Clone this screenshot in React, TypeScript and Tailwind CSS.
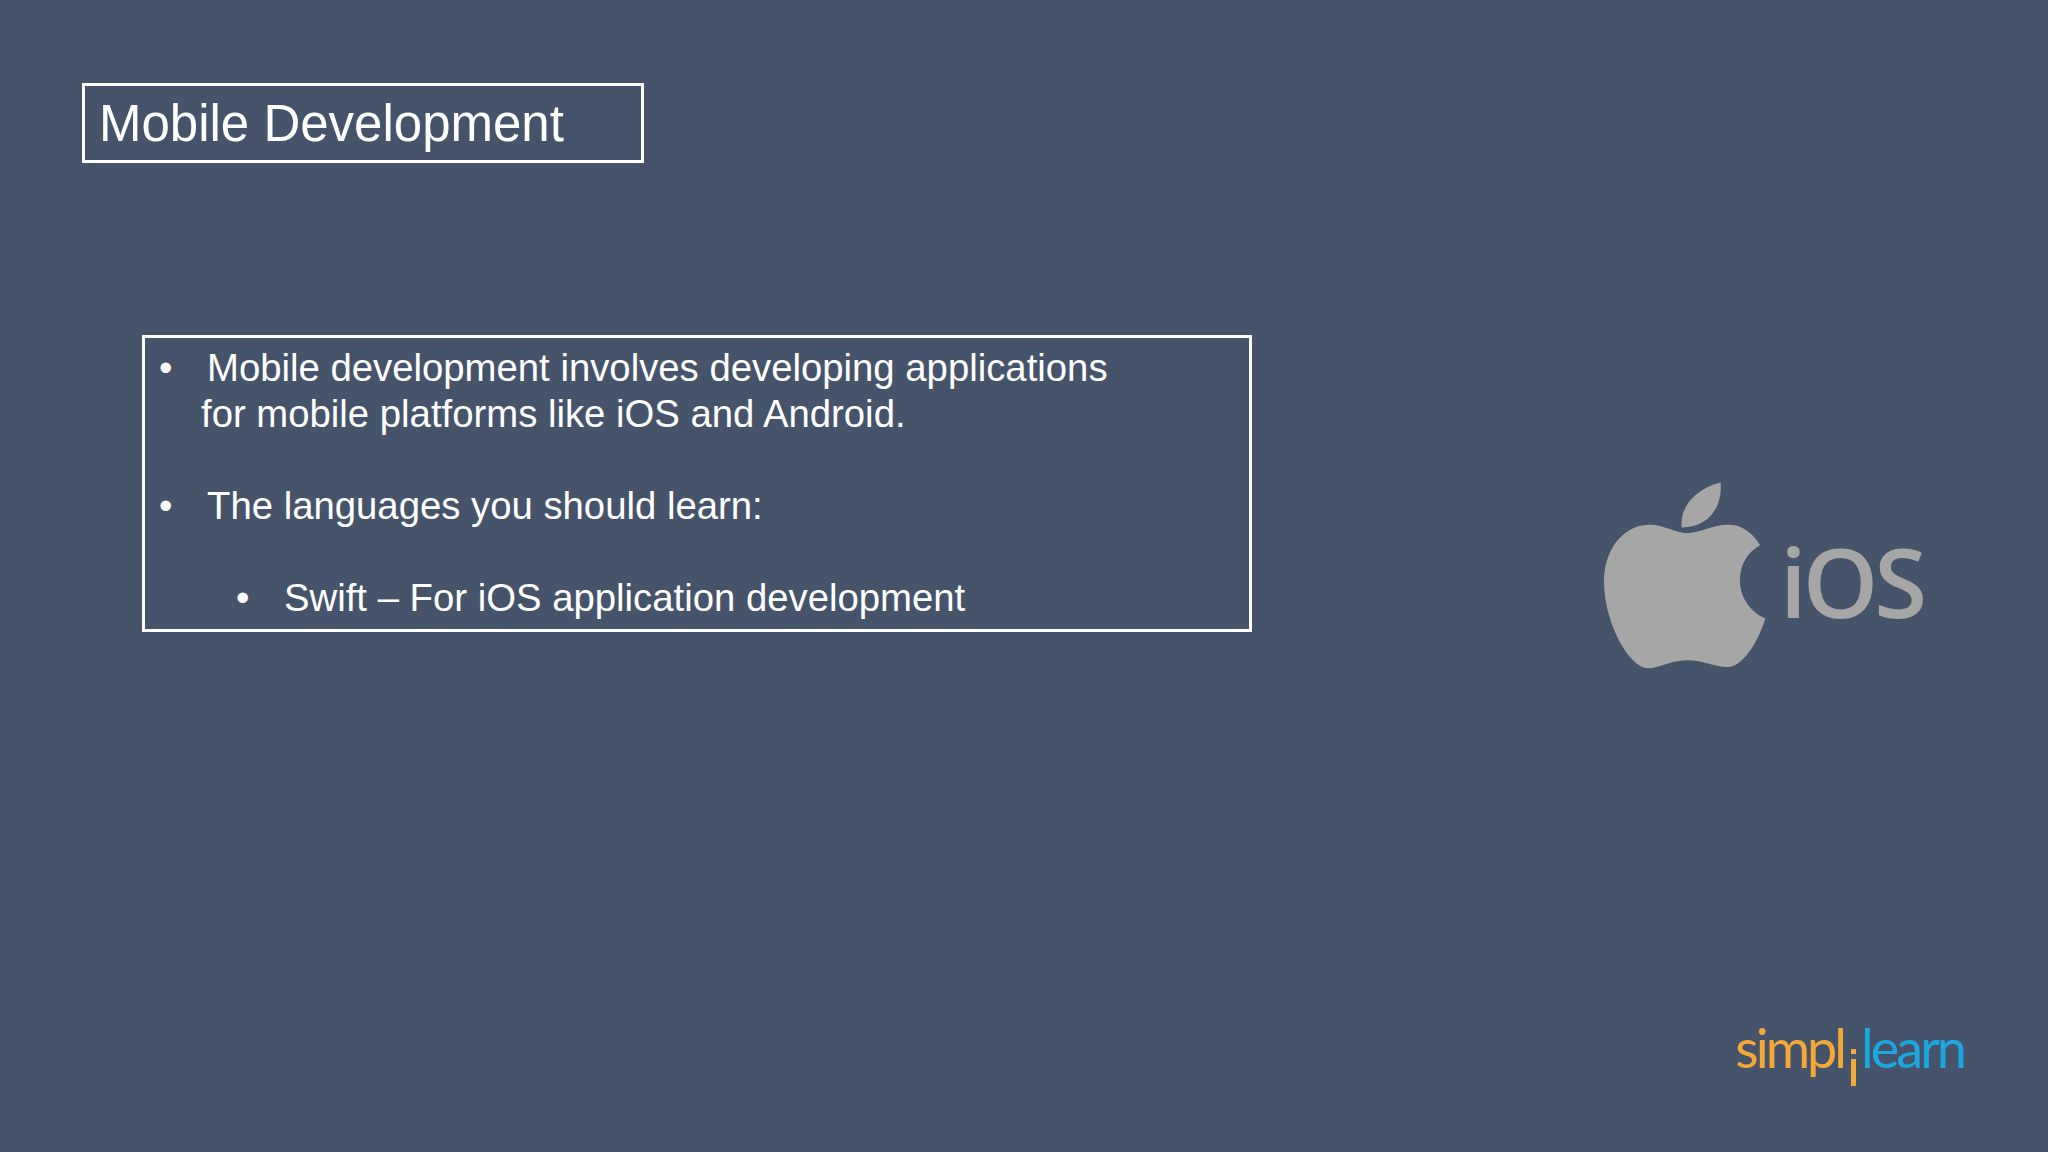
const arial = "font-['Liberation_Sans',Arial,sans-serif]";

function Bullet(props: { text: string; indent: string; gap: string }) {
  return (
    <div className={`flex h-[46px] items-center ${props.indent}`}>
      <span className={`shrink-0 ${props.gap}`}>•</span>
      <span>{props.text}</span>
    </div>
  );
}

function IosLogo() {
  return (
    <div className="flex items-start text-[#a6a6a6]">
      <svg viewBox="60 60 510 590" className="h-[197px] w-[170px] shrink-0 blur-[0.4px]" fill="currentColor">
        <path d="M422 70C340 90 298 150 305 205C380 205 428 150 422 70Z" />
        <path d="M320 222C360 222 400 195 450 197C490 198 520 225 540 258C500 280 478 320 480 370C482 420 515 460 556 478C540 530 510 590 470 615C430 640 390 603 320 603C260 605 225 635 190 625C130 600 70 470 72 360C75 260 140 195 210 197C250 197 290 222 320 222Z" />
      </svg>
      <span className="mt-[52px] ml-[10px] font-['Open_Sans',sans-serif] text-[96px] leading-[100px] font-semibold tracking-[-4px] blur-[0.4px]">
        iOS
      </span>
    </div>
  );
}

function SimplilearnLogo() {
  return (
    <div className="flex items-start font-['Lato',sans-serif] text-[54px] leading-[60px] font-normal tracking-[-3px]">
      <span className="text-[#f4a936]">simpl</span>
      <span className="mt-[31px] mr-[5px] ml-[7px] flex flex-col items-center gap-[5px]">
        <span className="h-[5px] w-[5px] bg-[#f4a936]" />
        <span className="h-[27px] w-[5px] bg-[#f4a936]" />
      </span>
      <span className="text-[#1ba8e0]">learn</span>
    </div>
  );
}

export default function App() {
  return (
    <div className={`flex h-[1152px] w-[2048px] flex-col overflow-hidden bg-[#46546b] pt-[83px] text-white ${arial}`}>
      <div className="ml-[82px] flex h-[80px] w-[562px] items-center border-[3px] border-white pl-[14px] text-[51px] leading-none">
        <span className="mt-px">Mobile Development</span>
      </div>

      <div className="mt-[172px] flex items-start">
        <div className="ml-[142px] h-[297px] w-[1110px] border-[3px] border-white pt-[7px] text-[38.3px]">
          <Bullet text="Mobile development involves developing applications" indent="pl-[14px]" gap="w-[48px]" />
          <div className="flex h-[46px] items-center pl-[56px]">for mobile platforms like iOS and Android.</div>
          <div className="h-[46px]" />
          <Bullet text="The languages you should learn:" indent="pl-[14px]" gap="w-[48px]" />
          <div className="h-[46px]" />
          <Bullet text="Swift – For iOS application development" indent="pl-[91px]" gap="w-[48px]" />
        </div>
        <div className="mt-[144px] ml-[348px]">
          <IosLogo />
        </div>
      </div>

      <div className="mt-[342px] mr-[84px] self-end">
        <SimplilearnLogo />
      </div>
    </div>
  );
}
